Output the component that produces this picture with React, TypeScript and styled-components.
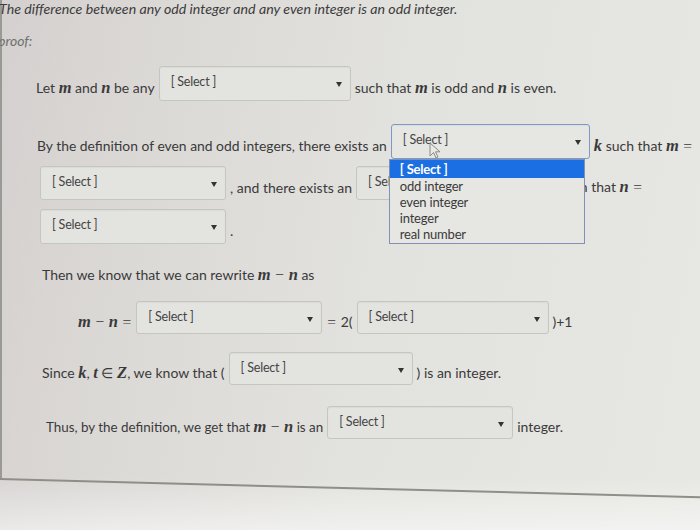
import React from "react";
import styled, { createGlobalStyle } from "styled-components";

const Global = createGlobalStyle`
  html, body { margin: 0; padding: 0; }
  body {
    width: 700px;
    height: 530px;
    overflow: hidden;
    font-family: Lato, "Open Sans", sans-serif;
    color: #3a3a3a;
    background: #e4e4e0;
  }
`;

const Page = styled.div`
  width: 700px;
  height: 530px;
  overflow: hidden;
  background:
    linear-gradient(180deg, rgba(0,0,0,0) 90%, rgba(255,255,255,0.5) 100%),
    linear-gradient(100deg, #d4d0cf 0%, #dcdad7 25%, #e2e2de 55%, #e7e7e3 100%);
  display: flex;
  flex-direction: column;
`;

const Card = styled.div`
  height: 478px;
  border-left: 2px solid #9a9a94;
  display: flex;
  flex-direction: column;
  position: relative;
`;

const BottomRule = styled.div`
  height: 2px;
  width: 720px;
  background: #8f8f88;
  transform: rotate(1.5deg);
  transform-origin: 0 0;
`;

const Title = styled.div`
  margin: 0 0 0 -3px;
  font-size: 14.2px;
  line-height: 17px;
  font-style: italic;
  color: #3c3c3c;
`;

const ProofLabel = styled.div`
  margin: 15px 0 0 -4px;
  font-size: 14px;
  line-height: 17px;
  font-style: italic;
  color: #6f6f6f;
`;

const Row = styled.div<{ $indent: number; $gap: number }>`
  display: flex;
  align-items: center;
  white-space: nowrap;
  margin-left: ${(p) => p.$indent}px;
  margin-top: ${(p) => p.$gap}px;
`;

const Txt = styled.span<{ $drop?: number; $size?: number }>`
  font-size: ${(p) => p.$size ?? 14}px;
  color: #3a3a3a;
  padding-top: ${(p) => p.$drop ?? 8}px;
  margin: 0 4px;
`;

const M = styled.span`
  font-family: "Liberation Serif", "DejaVu Serif", serif;
  font-style: italic;
  font-weight: bold;
  font-size: 16.5px;
`;

const Op = styled.span`
  font-family: "Liberation Serif", serif;
  font-size: 15.5px;
  margin: 0 1px;
`;

const SelectWrap = styled.div`
  position: relative;
`;

const SelectBox = styled.div<{ $w: number; $h: number; $open?: boolean }>`
  width: ${(p) => p.$w}px;
  height: ${(p) => p.$h}px;
  box-sizing: border-box;
  border: 1px solid ${(p) => (p.$open ? "#7f99c6" : "#c6c6c1")};
  border-radius: 3px;
  background: ${(p) => (p.$open ? "#e6e6e3" : "#e3e3df")};
  box-shadow: inset 0 1px 1px rgba(0,0,0,0.04);
  display: flex;
  align-items: flex-start;
  justify-content: space-between;
  padding: 7px 8px 0 11px;
`;

const Placeholder = styled.span`
  font-size: 12.5px;
  color: #444;
  letter-spacing: -0.2px;
`;

const Arrow = styled.span`
  width: 0;
  height: 0;
  margin-top: 8px;
  border-left: 3px solid transparent;
  border-right: 3px solid transparent;
  border-top: 5px solid #333;
`;

const DropList = styled.div`
  position: absolute;
  left: -2px;
  top: 100%;
  width: 196px;
  box-sizing: border-box;
  border: 1px solid #7f91b4;
  background: #e6e6e2;
  padding-bottom: 1px;
  z-index: 5;
`;

const Option = styled.div<{ $active?: boolean }>`
  font-size: 13px;
  padding: 0 10px;
  color: ${(p) => (p.$active ? "#ffffff" : "#3a3a3a")};
  background: ${(p) => (p.$active ? "#1c6fe3" : "transparent")};
  font-weight: ${(p) => (p.$active ? 700 : 400)};
  height: ${(p) => (p.$active ? "18px" : "16px")};
  line-height: ${(p) => (p.$active ? "18px" : "16px")};
  letter-spacing: -0.2px;
`;

const Cursor = styled.svg`
  position: absolute;
  left: 38px;
  top: 18px;
  z-index: 6;
`;

type SelProps = { w: number; h: number; open?: boolean };

const Select: React.FC<SelProps> = ({ w, h, open }) => (
  <SelectWrap>
    <SelectBox $w={w} $h={h} $open={open}>
      <Placeholder>[ Select ]</Placeholder>
      <Arrow />
    </SelectBox>
    {open && (
      <>
        <DropList>
          <Option $active>[ Select ]</Option>
          <Option>odd integer</Option>
          <Option>even integer</Option>
          <Option>integer</Option>
          <Option>real number</Option>
        </DropList>
        <Cursor width="14" height="18" viewBox="0 0 14 18">
          <path d="M1 1 L1 14 L4.5 10.5 L7 16 L9 15 L6.5 9.8 L11 9.8 Z" fill="#e8e8e6" stroke="#8a8a8a" strokeWidth="1" />
        </Cursor>
      </>
    )}
  </SelectWrap>
);

export default function App() {
  return (
    <>
      <Global />
      <Page>
        <Card>
          <Title>The difference between any odd integer and any even integer is an odd integer.</Title>
          <ProofLabel>proof:</ProofLabel>

          <Row $indent={30} $gap={17}>
            <Txt>
              Let <M>m</M> and <M>n</M> be any
            </Txt>
            <Select w={192} h={35} />
            <Txt>
              such that <M>m</M> is odd and <M>n</M> is even.
            </Txt>
          </Row>

          <Row $indent={31} $gap={23}>
            <Txt $size={13.88}>By the definition of even and odd integers, there exists an</Txt>
            <Select w={199} h={35} open />
            <Txt>
              <M>k</M> such that <M>m</M> <Op>=</Op>
            </Txt>
          </Row>

          <Row $indent={38} $gap={7}>
            <Select w={186} h={34} />
            <Txt>, and there exists an</Txt>
            <Select w={191} h={34} />
            <Txt>
              <M>t</M> such that <M>n</M> <Op>=</Op>
            </Txt>
          </Row>

          <Row $indent={38} $gap={9}>
            <Select w={186} h={35} />
            <Txt>.</Txt>
          </Row>

          <Row $indent={36} $gap={21}>
            <Txt $drop={0}>
              Then we know that we can rewrite <M>m</M> <Op>−</Op> <M>n</M> as
            </Txt>
          </Row>

          <Row $indent={72} $gap={16}>
            <Txt>
              <M>m</M> <Op>−</Op> <M>n</M> <Op>=</Op>
            </Txt>
            <Select w={186} h={33} />
            <Txt>
              <Op>=</Op> 2(
            </Txt>
            <Select w={192} h={33} />
            <Txt>)+1</Txt>
          </Row>

          <Row $indent={36} $gap={18}>
            <Txt>
              Since <M>k</M>, <M>t</M> ∈ <M>Z</M>, we know that (
            </Txt>
            <Select w={184} h={33} />
            <Txt>) is an integer.</Txt>
          </Row>

          <Row $indent={40} $gap={21}>
            <Txt $size={13.4}>
              Thus, by the definition, we get that <M>m</M> <Op>−</Op> <M>n</M> is an
            </Txt>
            <Select w={186} h={33} />
            <Txt>integer.</Txt>
          </Row>
        </Card>
        <BottomRule />
      </Page>
    </>
  );
}
